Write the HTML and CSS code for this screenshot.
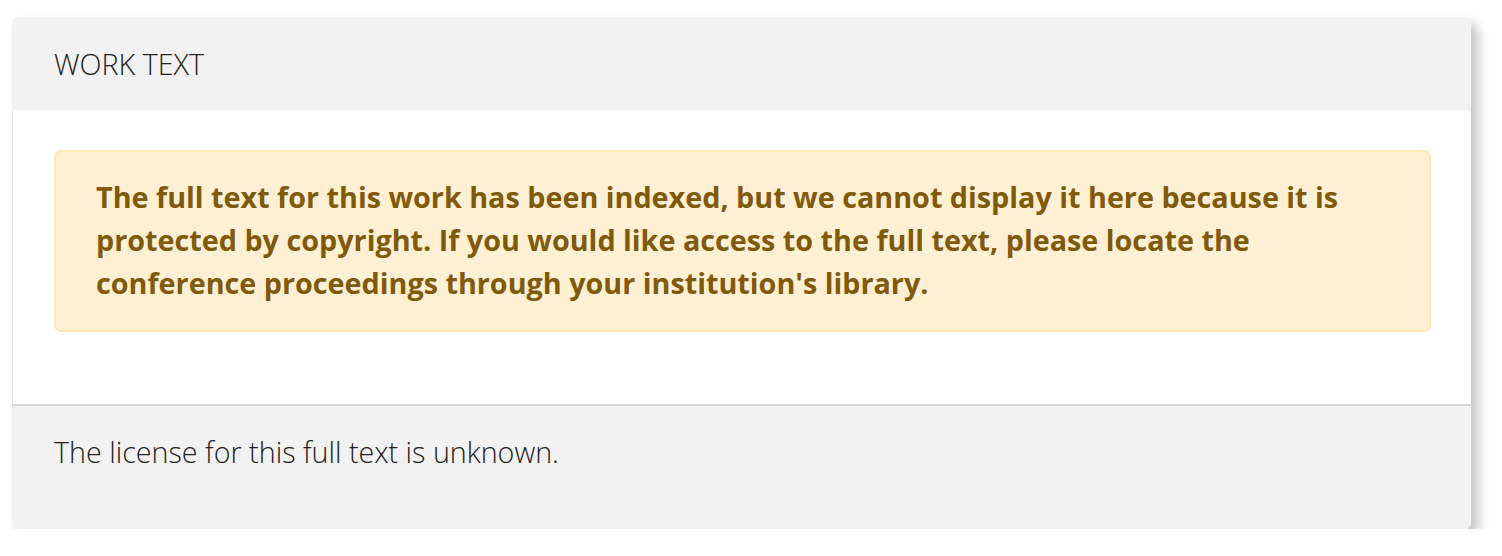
FILE: index.html
```html
<!DOCTYPE html>
<html>
<head>
<meta charset="utf-8">
<link rel="stylesheet" href="styles.css">
</head>
<body>
<div class="page">
  <section class="card">
    <header class="card-header">WORK TEXT</header>
    <div class="card-body">
      <div class="alert">The full text for this work has been indexed, but we cannot display it here because it is protected by copyright. If you would like access to the full text, please locate the conference proceedings through your institution's library.</div>
    </div>
    <footer class="card-footer">The license for this full text is unknown.</footer>
  </section>
</div>
</body>
</html>
```

FILE: styles.css
```css
html, body {
  margin: 0;
  padding: 0;
  background: #ffffff;
}
body {
  font-family: "Open Sans", "Liberation Sans", sans-serif;
  color: #222;
}
.page {
  padding: 17px 31px 0 12px;
}
.card {
  width: 1459px;
  border-radius: 6px;
  overflow: hidden;
  background: #fff;
  box-shadow: 7px 7px 12px rgba(0, 0, 0, 0.24);
}
.card-header {
  background: #f2f2f2;
  height: 93px;
  box-sizing: border-box;
  padding: 0 42px;
  display: flex;
  align-items: center;
  font-weight: 300;
  font-size: 28.7px;
  color: #222;
}
.card-body {
  padding: 40px 40px 72px 41px;
  border-left: 1px solid #e6e6e6;
}
.alert {
  background: #fff0d3;
  border: 2px solid #fde8b6;
  border-radius: 7px;
  padding: 23px 42px 26px 40px;
  color: #7f5a0b;
  font-weight: 700;
  font-size: 28.75px;
  line-height: 43px;
}
.card-footer {
  background: #f2f2f2;
  border-top: 2px solid #d6d6d6;
  height: 125px;
  box-sizing: border-box;
  padding: 26px 42px;
  font-weight: 300;
  font-size: 28.7px;
  color: #222;
}
```
